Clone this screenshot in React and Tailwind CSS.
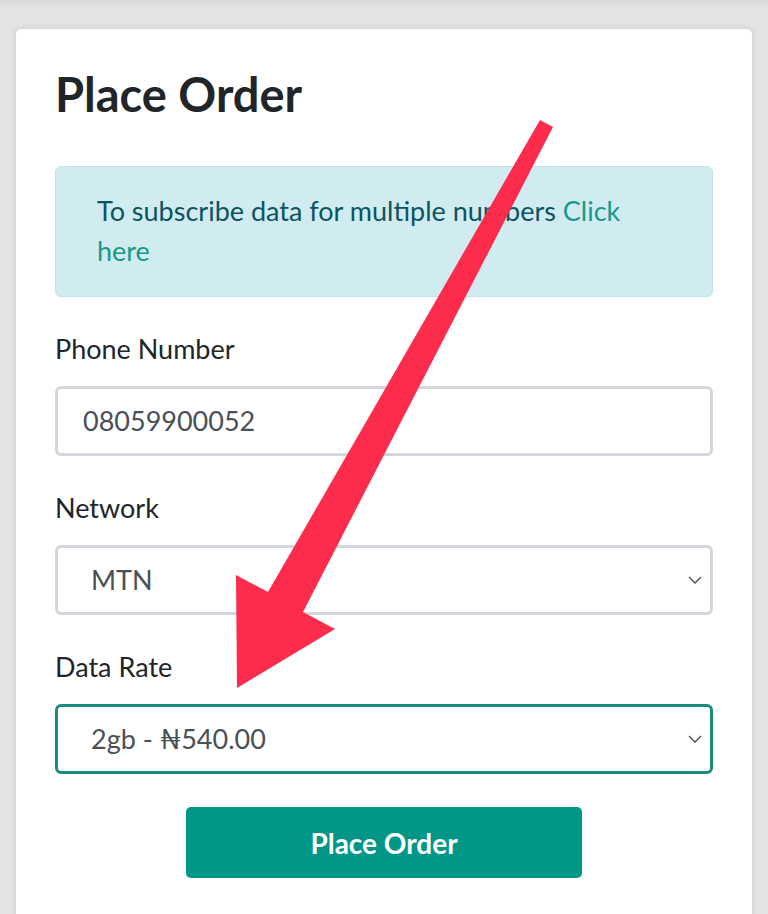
import React from 'react';

function Chevron() {
  return (
    <svg width="14" height="8" viewBox="0 0 14 8" className="shrink-0">
      <polyline points="1,1 7,7 13,1" fill="none" stroke="#4a4a4a" strokeWidth="1.3" />
    </svg>
  );
}

function Label({ children }) {
  return <div className="mt-[32px] text-[27px] leading-[40px] text-[#212529]">{children}</div>;
}

export default function App() {
  return (
    <div className="relative min-h-screen bg-[#e4e4e4] pt-[29px] px-4 font-['Lato','DejaVu_Sans',sans-serif] overflow-hidden">
      {/* top shade */}
      <div className="absolute inset-x-0 top-0 h-[8px] bg-gradient-to-b from-[#d8d8d8] to-transparent" />

      {/* Card */}
      <div className="bg-white rounded-[5px] pt-[37px] px-[39px] pb-[80px] shadow-[0_0_6px_rgba(0,0,0,0.12)]">
        <h1 className="text-[47px] font-bold leading-[56px] text-[#212529]">Place Order</h1>

        {/* Info */}
        <div className="mt-[44px] rounded-[6px] border border-[#bee5eb] bg-[#d1ecf1] pl-[41px] pr-[60px] pt-[24px] pb-[25px] text-[27px] leading-[40px] text-[#0c5460]">
          To subscribe data for multiple numbers <span className="text-[#17998a]">Click here</span>
        </div>

        <Label>Phone Number</Label>
        <div className="mt-[17px] h-[70px] border-[3px] border-[#d3d7db] rounded-[6px] flex items-center pl-[25px] text-[27px] text-[#495057]">
          08059900052
        </div>

        <Label>Network</Label>
        <div className="mt-[17px] h-[70px] border-[3px] border-[#d3d7db] rounded-[6px] flex items-center justify-between pl-[33px] pr-[8px] text-[27px] text-[#495057]">
          <span>MTN</span>
          <Chevron />
        </div>

        <Label>Data Rate</Label>
        <div className="mt-[17px] h-[70px] border-[3px] border-[#1c8b7d] rounded-[6px] flex items-center justify-between pl-[33px] pr-[8px] text-[27px] text-[#495057]">
          <span>2gb - ₦540.00</span>
          <Chevron />
        </div>

        <button className="mt-[33px] mx-auto flex items-center justify-center w-[396px] h-[71px] rounded-[5px] bg-[#009688] text-white font-bold text-[28px]">
          Place Order
        </button>
      </div>

      {/* Annotation arrow */}
      <svg className="absolute top-0 left-0 pointer-events-none" width="768" height="914" viewBox="0 0 768 914">
        <polygon points="540,120 553,127 303,612 335,629 237,688 236,575 268,592" fill="#fd2b4c" />
      </svg>
    </div>
  );
}
